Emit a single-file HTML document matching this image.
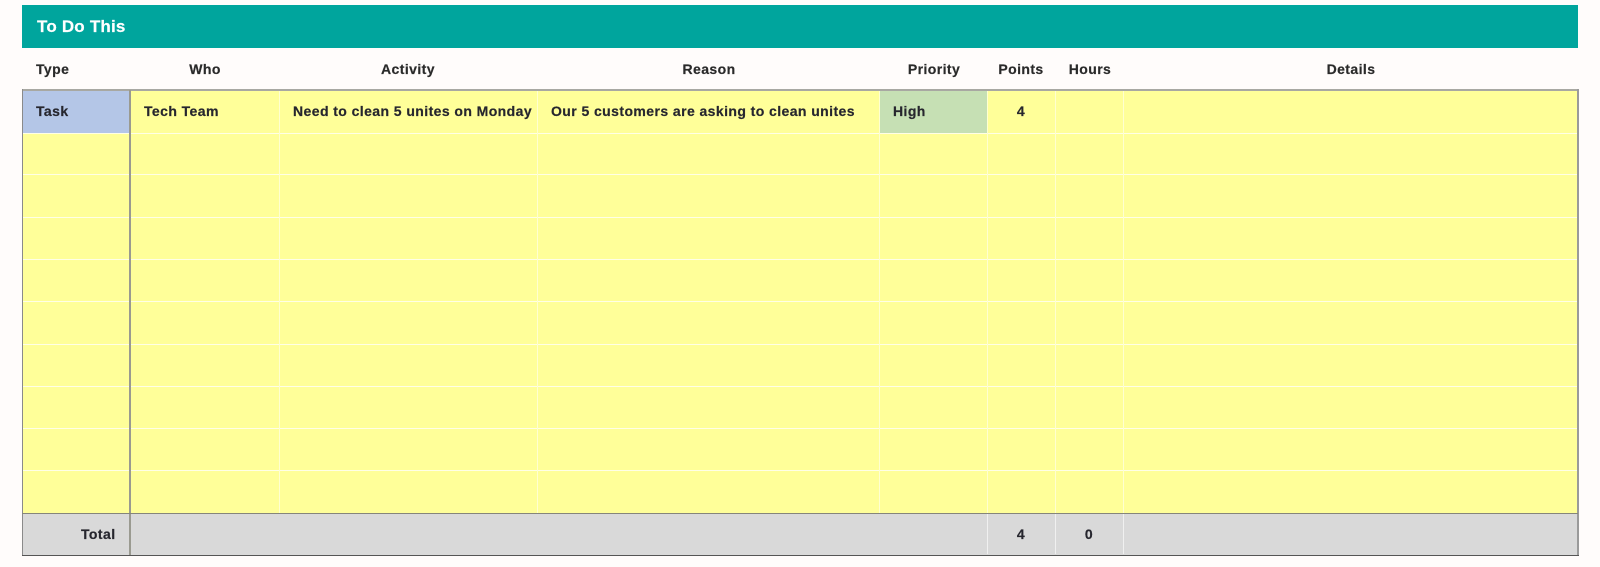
<!DOCTYPE html>
<html lang="en">
<head>
<meta charset="utf-8">
<title>To Do This</title>
<style>
html,body{margin:0;padding:0;width:1600px;height:567px;overflow:hidden;background:#fffcfb;}
body{position:relative;font-family:"Liberation Sans",sans-serif;font-weight:bold;font-size:14px;letter-spacing:.42px;color:#26262e;}
#w{position:absolute;left:0;top:0;width:1600px;height:567px;filter:blur(.3px);}
.b{position:absolute;}
.t{position:absolute;white-space:nowrap;line-height:16px;-webkit-text-stroke:.2px currentColor;}
.c{transform:translateX(-50%);}
.h{color:#2a2a2a;}
.hl{position:absolute;left:23px;width:1555px;height:1px;background:#ffffe6;}
.vl{position:absolute;top:91px;height:422px;width:1px;background:#ffffd0;}
.gv{position:absolute;top:514px;height:40px;width:1px;background:#f0f0f0;}
</style>
</head>
<body>
<div id="w">
<div class="b" style="left:22px;top:5px;width:1556px;height:43px;background:#00a59d;"></div>
<div class="t" style="left:37px;top:19px;color:#fff;font-size:17px;letter-spacing:.2px;">To Do This</div>

<div class="t h" style="left:36px;top:61px;">Type</div>
<div class="t h c" style="left:205px;top:61px;">Who</div>
<div class="t h c" style="left:408px;top:61px;">Activity</div>
<div class="t h c" style="left:709px;top:61px;">Reason</div>
<div class="t h c" style="left:934px;top:61px;">Priority</div>
<div class="t h c" style="left:1021px;top:61px;">Points</div>
<div class="t h c" style="left:1090px;top:61px;">Hours</div>
<div class="t h c" style="left:1351px;top:61px;">Details</div>

<div class="b" style="left:22px;top:90px;width:1556px;height:423px;background:#ffff99;"></div>
<div class="b" style="left:23px;top:91px;width:106px;height:42px;background:#b4c6e7;"></div>
<div class="b" style="left:880px;top:91px;width:107px;height:42px;background:#c6e0b4;"></div>
<div class="b" style="left:22px;top:513px;width:1556px;height:42px;background:#d9d9d9;"></div>

<div class="hl" style="top:133px;"></div>
<div class="hl" style="top:174px;"></div>
<div class="hl" style="top:217px;"></div>
<div class="hl" style="top:259px;"></div>
<div class="hl" style="top:301px;"></div>
<div class="hl" style="top:344px;"></div>
<div class="hl" style="top:386px;"></div>
<div class="hl" style="top:428px;"></div>
<div class="hl" style="top:470px;"></div>

<div class="vl" style="left:279px;"></div>
<div class="vl" style="left:537px;"></div>
<div class="vl" style="left:879px;"></div>
<div class="vl" style="left:987px;"></div>
<div class="vl" style="left:1055px;"></div>
<div class="vl" style="left:1123px;"></div>
<div class="gv" style="left:987px;"></div>
<div class="gv" style="left:1055px;"></div>
<div class="gv" style="left:1123px;"></div>

<div class="b" style="left:22px;top:89px;width:1556px;height:2px;background:#a8a8a2;"></div>
<div class="b" style="left:22px;top:89px;width:1px;height:466px;background:#8a8a8a;"></div>
<div class="b" style="left:129px;top:90px;width:2px;height:465px;background:#9a9a90;"></div>
<div class="b" style="left:1577px;top:89px;width:2px;height:466px;background:#9a9a9a;"></div>
<div class="b" style="left:22px;top:513px;width:1556px;height:1px;background:#85857a;"></div>
<div class="b" style="left:22px;top:555px;width:1557px;height:1px;background:#555;"></div>

<div class="t" style="left:36px;top:103px;">Task</div>
<div class="t" style="left:144px;top:103px;">Tech Team</div>
<div class="t" style="left:293px;top:103px;">Need to clean 5 unites on Monday</div>
<div class="t" style="left:551px;top:103px;">Our 5 customers are asking to clean unites</div>
<div class="t" style="left:893px;top:103px;">High</div>
<div class="t c" style="left:1021px;top:103px;">4</div>

<div class="t" style="left:81px;top:526px;">Total</div>
<div class="t c" style="left:1021px;top:526px;">4</div>
<div class="t c" style="left:1089px;top:526px;">0</div>
</div>
</body>
</html>
